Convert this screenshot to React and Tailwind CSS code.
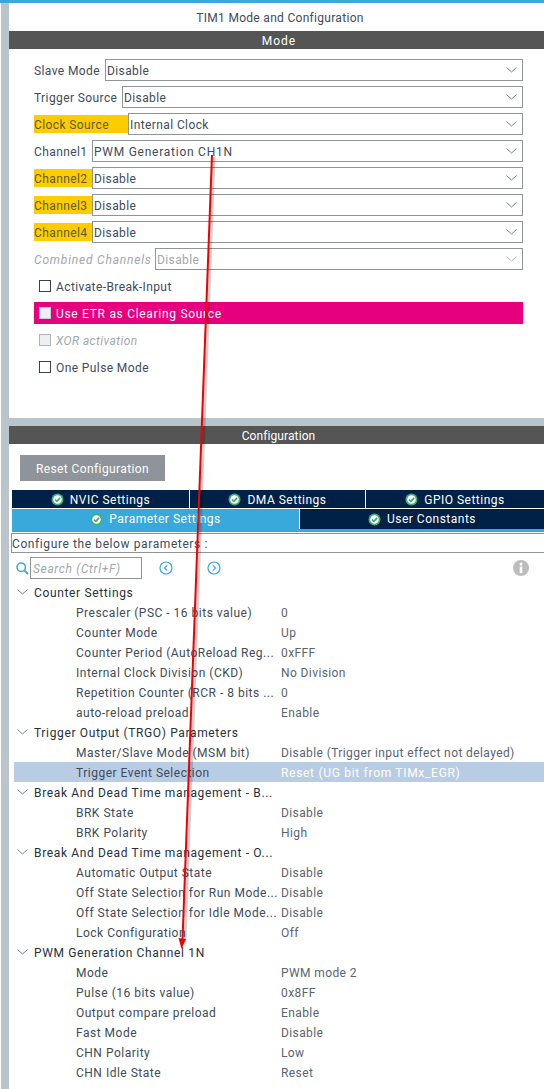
const modeRows = [
    { label: "Slave Mode", value: "Disable", w: "w-[71px]" },
    { label: "Trigger Source", value: "Disable", w: "w-[88px]" },
    { label: "Clock Source", value: "Internal Clock", w: "w-[94px]", warn: true },
    { label: "Channel1", value: "PWM Generation CH1N", w: "w-[58px]", wide: true },
    { label: "Channel2", value: "Disable", w: "w-[58px]", warn: true },
    { label: "Channel3", value: "Disable", w: "w-[58px]", warn: true },
    { label: "Channel4", value: "Disable", w: "w-[58px]", warn: true },
    { label: "Combined Channels", value: "Disable", w: "w-[121px]", off: true },
];

const tree = [
    {
        title: "Counter Settings",
        rows: [
            ["Prescaler (PSC - 16 bits value)", "0"],
            ["Counter Mode", "Up"],
            ["Counter Period (AutoReload Reg...", "0xFFF"],
            ["Internal Clock Division (CKD)", "No Division"],
            ["Repetition Counter (RCR - 8 bits ...", "0"],
            ["auto-reload preload", "Enable"],
        ],
    },
    {
        title: "Trigger Output (TRGO) Parameters",
        rows: [
            ["Master/Slave Mode (MSM bit)", "Disable (Trigger input effect not delayed)"],
            ["Trigger Event Selection", "Reset (UG bit from TIMx_EGR)", true],
        ],
    },
    {
        title: "Break And Dead Time management - B...",
        rows: [
            ["BRK State", "Disable"],
            ["BRK Polarity", "High"],
        ],
    },
    {
        title: "Break And Dead Time management - O...",
        rows: [
            ["Automatic Output State", "Disable"],
            ["Off State Selection for Run Mode...", "Disable"],
            ["Off State Selection for Idle Mode...", "Disable"],
            ["Lock Configuration", "Off"],
        ],
    },
    {
        title: "PWM Generation Channel 1N",
        rows: [
            ["Mode", "PWM mode 2"],
            ["Pulse (16 bits value)", "0x8FF"],
            ["Output compare preload", "Enable"],
            ["Fast Mode", "Disable"],
            ["CHN Polarity", "Low"],
            ["CHN Idle State", "Reset"],
        ],
    },
];

function Chevron({ className }) {
    return (
        <svg width="11" height="6" viewBox="0 0 11 6" className={`shrink-0 ${className}`}>
            <path d="M0.5 0.5 L5.5 5 L10.5 0.5" fill="none" stroke="currentColor" strokeWidth="1" />
        </svg>
    );
}

function OkIcon() {
    return (
        <svg width="13" height="13" viewBox="0 0 13 13" className="shrink-0">
            <circle cx="6.5" cy="6.5" r="6" fill="#3fae72" />
            <circle cx="6.5" cy="6.5" r="4.3" fill="#fff" />
            <path d="M4 6.6 L5.9 8.4 L9.1 4.9" fill="none" stroke="#3fae72" strokeWidth="1.7" />
        </svg>
    );
}

function ArrowButton({ dir }) {
    return (
        <svg width="14" height="14" viewBox="0 0 14 14">
            <circle cx="7" cy="7" r="6" fill="none" stroke="#39a9dc" strokeWidth="1.2" />
            <path d={dir === "left" ? "M8.2 4.3 L5.5 7 L8.2 9.7" : "M5.8 4.3 L8.5 7 L5.8 9.7"} fill="none" stroke="#39a9dc" strokeWidth="1.2" />
        </svg>
    );
}

function ModeRow({ label, value, w, warn, off, wide }) {
    return (
        <div className="flex items-center h-[21px] mb-[6px]">
            <div
                className={`${w} h-[18px] leading-[20px] whitespace-nowrap shrink-0 ${warn ? "bg-[#ffcc00] text-[#5c5a3a]" : ""} ${off ? "italic text-[#a2a7ac] tracking-[0.8px]" : ""}`}
            >
                {label}
            </div>
            <div className={`flex-1 h-[22px] border border-[#8e9499] flex items-center justify-between pl-[1px] pr-[5px] ${off ? "text-[#a2a7ac]" : ""}`}>
                <span className={`pt-[2px] ${wide ? "tracking-[0.75px]" : ""}`}>{value}</span>
                <Chevron className={off ? "text-[#b5bac0]" : "text-[#7a858e]"} />
            </div>
        </div>
    );
}

function CheckRow({ label, pink, off }) {
    return (
        <div className={`flex items-center h-[22px] pl-[5px] gap-[5px] ${pink ? "bg-[#e6007e] text-white tracking-[0.7px]" : ""} ${off ? "italic text-[#a2a7ac]" : ""}`}>
            <span className={`w-[12px] h-[12px] border ${pink ? "bg-[#eeeff2] border-[#c9ccd3]" : off ? "bg-[#eeeff2] border-[#b0b4ba]" : "border-[#39434f]"}`}></span>
            <span className="pt-[2px]">{label}</span>
        </div>
    );
}

function Tab({ className, label }) {
    return (
        <div className={`flex items-center justify-center gap-[6px] tracking-[0.5px] ${className}`}>
            <OkIcon />
            <span>{label}</span>
        </div>
    );
}

export default function App() {
    return (
        <div className="relative w-[544px] h-[1089px] overflow-hidden bg-white text-[12px] tracking-[0.4px] text-[#414b58] font-['Roboto',sans-serif]">
            <div className="h-[3px] bg-[#39a9dc]"></div>
            <div className="flex h-[1086px]">
                <div className="w-[1px] bg-white"></div>
                <div className="w-[8px] bg-[#b9c4cb]"></div>
                <div className="flex-1 min-w-0 flex flex-col">
                    <div className="h-[28px] pl-[7px] pt-[2px] flex items-center justify-center tracking-[0.3px]">TIM1 Mode and Configuration</div>
                    <div className="h-[18px] leading-[20px] pl-[5px] bg-[#545554] text-white text-center tracking-[1px]">Mode</div>

                    <div className="h-[369px] pl-[25px] pr-[21px] pt-[10px]">
                        {modeRows.map((r) => (
                            <ModeRow key={r.label} {...r} />
                        ))}
                        <div className="flex flex-col gap-[5px]">
                            <CheckRow label="Activate-Break-Input" />
                            <CheckRow label="Use ETR as Clearing Source" pink />
                            <CheckRow label="XOR activation" off />
                            <CheckRow label="One Pulse Mode" />
                        </div>
                    </div>

                    <div className="h-[8px] bg-[#b9c4cb]"></div>
                    <div className="h-[18px] leading-[20px] pl-[4px] bg-[#545554] text-white text-center tracking-[0.1px]">Configuration</div>

                    <div className="pl-[11px] pt-[11px] pb-[9px]">
                        <button className="block w-[145px] h-[26px] pt-[1px] bg-[#8e9499] text-white tracking-[0.4px]">Reset Configuration</button>
                    </div>

                    <div className="pl-[3px] text-white">
                        <div className="flex h-[18px] bg-[#002147]">
                            <Tab className="w-[178px] border-r border-white pt-[1px]" label="NVIC Settings" />
                            <Tab className="w-[176px] border-r border-white pt-[1px]" label="DMA Settings" />
                            <Tab className="flex-1 pt-[1px]" label="GPIO Settings" />
                        </div>
                        <div className="flex h-[20px] mt-[1px]">
                            <Tab className="w-[288px] bg-[#39a9dc] border-r border-white" label="Parameter Settings" />
                            <Tab className="flex-1 bg-[#002147]" label="User Constants" />
                        </div>
                        <div className="h-[3px] bg-[#39a9dc]"></div>
                    </div>

                    <div className="ml-[2px] mt-[1px] h-[20px] leading-[20px] border-y border-l border-[#8e9499] tracking-[0.6px]">Configure the below parameters :</div>

                    <div className="flex items-center h-[26px] mt-[2px] pl-[7px] pr-[15px]">
                        <svg width="13" height="13" viewBox="0 0 13 13" className="mr-[1px] shrink-0">
                            <circle cx="5.2" cy="5.2" r="4.2" fill="none" stroke="#39a9dc" strokeWidth="1.5" />
                            <path d="M8.3 8.3 L12 12" stroke="#39a9dc" strokeWidth="1.8" />
                        </svg>
                        <div className="w-[112px] h-[22px] leading-[22px] border border-[#8e9499] pl-[2px] italic text-[#a2a7ac] tracking-[0.65px]">Search (Ctrl+F)</div>
                        <div className="ml-[17px]"><ArrowButton dir="left" /></div>
                        <div className="ml-[34px]"><ArrowButton dir="right" /></div>
                        <svg width="16" height="16" viewBox="0 0 16 16" className="ml-auto">
                            <circle cx="8" cy="8" r="8" fill="#bdbdbd" />
                            <circle cx="8" cy="4" r="1.5" fill="#fff" />
                            <rect x="6.7" y="6.5" width="2.6" height="6.5" fill="#fff" />
                        </svg>
                    </div>

                    <div className="pl-[5px] mt-[1px]">
                        {tree.map((group) => (
                            <div key={group.title}>
                                <div className="flex items-center h-[20px] text-[#27303c] whitespace-nowrap tracking-[0.65px]">
                                    <Chevron className="text-[#7a858e] ml-[3px] mr-[6px]" />
                                    <span className="pt-[2px]">{group.title}</span>
                                </div>
                                {group.rows.map(([name, value, selected]) => (
                                    <div key={name} className={`flex items-center h-[20px] pt-[2px] whitespace-nowrap ${selected ? "bg-[#b8cce4]" : ""}`}>
                                        <div className="w-[267px] pl-[62px] shrink-0 tracking-[0.5px]">{name}</div>
                                        <div className={selected ? "text-white tracking-[0.7px]" : "text-[#5a6470]"}>{value}</div>
                                    </div>
                                ))}
                            </div>
                        ))}
                    </div>
                </div>
            </div>

            {/* hand drawn arrow over the screenshot */}
            <svg className="absolute left-0 top-0 pointer-events-none" width="544" height="1089" viewBox="0 0 544 1089">
                <path d="M214 157 L185 940" stroke="#000" strokeOpacity="0.18" strokeWidth="3" fill="none" />
                <path d="M212 155 L182.5 940" stroke="#f00000" strokeWidth="2" fill="none" />
                <path d="M178.5 938 L186 939 L181.5 949 Z" fill="#f00000" />
            </svg>
        </div>
    );
}
